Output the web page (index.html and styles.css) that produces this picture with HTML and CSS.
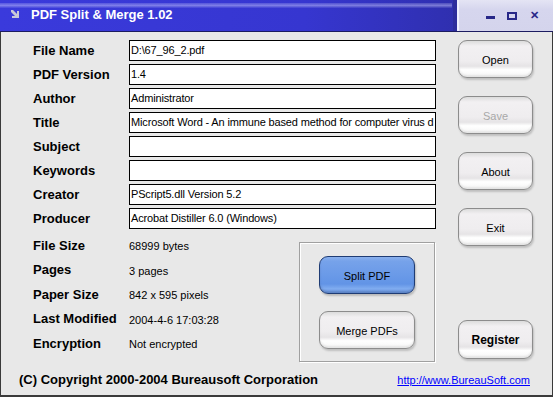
FILE: index.html
```html
<!DOCTYPE html>
<html>
<head>
    <title>PDF Split &amp; Merge 1.02</title>
    <link rel="stylesheet" href="styles.css">
</head>
<body>
    <div class="window">
        <div class="titlebar">
            <div class="title">
                <svg class="app-icon" width="9" height="9" viewBox="0 0 9 9">
                    <path d="M0 0 L2 0 L6 4 L6 1 L8 1 L8 8 L1 8 L1 6 L4 6 L0 2 Z" fill="#c8c8d8"/>
                </svg>
                PDF Split &amp; Merge 1.02
            </div>
            <div class="controls">
                <span class="ctl ctl-min"></span>
                <span class="ctl ctl-max"></span>
                <span class="ctl ctl-close">&#x2715;</span>
            </div>
        </div>

        <div class="content">
            <div class="main">
                <div class="fields">
                    <label>File Name</label><div class="box">D:\67_96_2.pdf</div>
                    <label>PDF Version</label><div class="box">1.4</div>
                    <label>Author</label><div class="box">Administrator</div>
                    <label>Title</label><div class="box">Microsoft Word - An immune based method for computer virus d</div>
                    <label>Subject</label><div class="box"></div>
                    <label>Keywords</label><div class="box"></div>
                    <label>Creator</label><div class="box">PScript5.dll Version 5.2</div>
                    <label>Producer</label><div class="box">Acrobat Distiller 6.0 (Windows)</div>
                </div>

                <div class="lower">
                    <div class="info">
                        <label>File Size</label><span>68999 bytes</span>
                        <label>Pages</label><span>3 pages</span>
                        <label>Paper Size</label><span>842 x 595 pixels</span>
                        <label>Last Modified</label><span>2004-4-6 17:03:28</span>
                        <label>Encryption</label><span>Not encrypted</span>
                    </div>
                    <div class="group">
                        <button class="btn btn-blue">Split PDF</button>
                        <button class="btn">Merge PDFs</button>
                    </div>
                </div>
            </div>

            <div class="side">
                <button class="btn">Open</button>
                <button class="btn disabled">Save</button>
                <button class="btn">About</button>
                <button class="btn">Exit</button>
                <button class="btn bold register">Register</button>
            </div>
        </div>

        <div class="footer">
            <span class="copy">(C) Copyright 2000-2004 Bureausoft Corporation</span>
            <a href="#">http://www.BureauSoft.com</a>
        </div>
    </div>
</body>
</html>
```

FILE: styles.css
```css
html, body {
    margin: 0;
    padding: 0;
}

body {
    width: 553px;
    height: 397px;
    overflow: hidden;
    font-family: "Liberation Sans", Arial, sans-serif;
    background-color: #e8e8e8;
}

.window {
    width: 553px;
    height: 397px;
    box-sizing: border-box;
    border-left: 1px solid #3a3a3a;
    border-right: 1px solid #3a3a3a;
    border-bottom: 2px solid #3a3a3a;
    background-color: #e8e8e8;
    display: flex;
    flex-direction: column;
}

/* title bar */
.titlebar {
    height: 32px;
    margin: 0 -1px;
    display: flex;
    background: linear-gradient(to right, #3a3adc 0%, #3636d0 55%, #2b2b9a 100%);
    border-bottom: 1px solid #1c1c60;
    box-sizing: border-box;
    position: relative;
}

.titlebar::before {
    content: "";
    position: absolute;
    left: 0;
    top: 3px;
    width: 452px;
    height: 5px;
    background: linear-gradient(to bottom, rgba(255,255,255,0.15), rgba(210,210,255,0.45), rgba(255,255,255,0.05));
}

.title {
    flex: 1;
    display: flex;
    align-items: center;
    gap: 11px;
    padding-left: 11px;
    padding-bottom: 2px;
    color: #ffffff;
    font-weight: bold;
    font-size: 13px;
    position: relative;
}

.controls {
    width: 96px;
    display: flex;
    align-items: center;
    justify-content: flex-end;
    gap: 12px;
    padding-right: 14px;
    box-sizing: border-box;
    background: linear-gradient(to bottom, #e4e4f4 0%, #d6d6ee 30%, #d4d4ec 100%);
    border-left: 2px solid #eeeeff;
    box-shadow: -4px 0 0 #2c2c9c;
}

.ctl {
    width: 10px;
    height: 9px;
    color: #282888;
    font-size: 11px;
    font-weight: bold;
    line-height: 9px;
    text-align: center;
    box-sizing: border-box;
    padding-top: 2px;
}

.ctl-min {
    border-bottom: 3px solid #282888;
    height: 7px;
    width: 9px;
}

.ctl-max {
    border: 2px solid #282888;
    width: 10px;
    height: 8px;
}

.ctl-close {
    width: 10px;
    padding-top: 0;
}

/* content */
.content {
    display: flex;
    padding-top: 8px;
}

.main {
    width: 456px;
    padding-left: 32px;
    box-sizing: border-box;
}

.fields {
    display: grid;
    grid-template-columns: 96px 307px;
    grid-auto-rows: 21px;
    row-gap: 3px;
    align-items: center;
}

label {
    font-weight: bold;
    font-size: 13px;
    color: #000;
}

.box {
    height: 21px;
    box-sizing: border-box;
    border: 1px solid #000;
    background-color: #fff;
    font-size: 11px;
    letter-spacing: -0.15px;
    line-height: 18px;
    padding-left: 1px;
    white-space: nowrap;
    overflow: hidden;
}

.lower {
    display: flex;
    margin-top: 4px;
}

.info {
    display: grid;
    grid-template-columns: 96px 170px;
    grid-auto-rows: 24.5px;
    align-items: center;
    align-self: flex-start;
}

.info span {
    font-size: 11px;
    padding-top: 2px;
}

.group {
    margin-top: 9px;
    width: 136px;
    height: 120px;
    box-sizing: border-box;
    border: 1px solid #a0a0a0;
    box-shadow: inset 1px 1px 0 #fff, 1px 1px 0 #fff;
    display: flex;
    flex-direction: column;
    align-items: center;
    gap: 17px;
    padding-top: 13px;
}

.side {
    display: flex;
    flex-direction: column;
    gap: 18px;
    padding-left: 1px;
}

/* glossy buttons */
.btn {
    width: 75px;
    height: 38px;
    border: 1px solid #8c8c8c;
    border-radius: 9px;
    font-family: "Liberation Sans", Arial, sans-serif;
    font-size: 11px;
    color: #000;
    padding: 1px 0 0;
    background: linear-gradient(to bottom, #dcdcdc 0%, #f2f0f2 14%, #efedef 55%, #e6e4e6 70%, #ffffff 80%, #f6f6f6 100%);
    box-shadow: inset 0 -2px 2px rgba(0,0,0,0.08), 1px 2px 2px rgba(0,0,0,0.18);
    cursor: pointer;
}

.group .btn {
    width: 96px;
}

.btn-blue {
    border-color: #1f3c74;
    background: linear-gradient(to bottom, #8ab0ec 0%, #76a2ea 12%, #6a9ae8 50%, #6294e6 75%, #80acf0 88%, #6a98e0 100%);
    box-shadow: inset 0 -2px 2px rgba(0,0,40,0.15), 1px 2px 2px rgba(0,0,0,0.2);
}

.disabled {
    color: #a8a8a8;
}

.bold {
    font-weight: bold;
    font-size: 12px;
}

.register {
    margin-top: 56px;
    height: 39px;
}

/* footer */
.footer {
    margin-top: auto;
    display: flex;
    justify-content: space-between;
    align-items: center;
    padding: 0 22px 8px 18px;
}

.copy {
    font-weight: bold;
    font-size: 13px;
}

.footer a {
    font-size: 11px;
    color: #0000ff;
}
```
